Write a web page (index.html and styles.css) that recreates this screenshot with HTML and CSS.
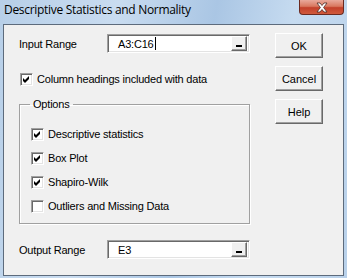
FILE: index.html
```html
<!DOCTYPE html>
<html lang="en">
<head>
  <meta charset="UTF-8">
  <title>Descriptive Statistics and Normality</title>
  <link rel="stylesheet" href="styles.css">
</head>
<body>
  <div class="window">
    <div class="titlebar">
      <span class="title">Descriptive Statistics and Normality</span>
      <div class="close">
        <svg width="14" height="11" viewBox="0 0 14 11">
          <path d="M2 1 L5 1 L7 3.5 L9 1 L12 1 L8.6 5.5 L12 10 L9 10 L7 7.5 L5 10 L2 10 L5.4 5.5 Z" fill="#fff" stroke="#4a2a24" stroke-width="0.8"/>
        </svg>
      </div>
    </div>

    <div class="client">
      <div class="main">
        <div class="range-row">
          <span class="label">Input Range</span>
          <div class="refedit">
            <span class="value">A3:C16<span class="caret"></span></span>
            <span class="browse"><span class="bar"></span></span>
          </div>
        </div>

        <label class="check top-check">
          <span class="box"><svg width="9" height="9" viewBox="0 0 9 9"><path d="M1 3 L3 5 L7 1 L7 4 L3 8 L1 6 Z" fill="#000"/></svg></span>
          Column headings included with data
        </label>

        <fieldset class="group">
          <legend>Options</legend>
          <label class="check">
            <span class="box"><svg width="9" height="9" viewBox="0 0 9 9"><path d="M1 3 L3 5 L7 1 L7 4 L3 8 L1 6 Z" fill="#000"/></svg></span>
            Descriptive statistics
          </label>
          <label class="check">
            <span class="box"><svg width="9" height="9" viewBox="0 0 9 9"><path d="M1 3 L3 5 L7 1 L7 4 L3 8 L1 6 Z" fill="#000"/></svg></span>
            Box Plot
          </label>
          <label class="check">
            <span class="box"><svg width="9" height="9" viewBox="0 0 9 9"><path d="M1 3 L3 5 L7 1 L7 4 L3 8 L1 6 Z" fill="#000"/></svg></span>
            Shapiro-Wilk
          </label>
          <label class="check">
            <span class="box"></span>
            Outliers and Missing Data
          </label>
        </fieldset>

        <div class="range-row out-row">
          <span class="label">Output Range</span>
          <div class="refedit">
            <span class="value">E3</span>
            <span class="browse"><span class="bar"></span></span>
          </div>
        </div>
      </div>

      <div class="buttons">
        <button>OK</button>
        <button>Cancel</button>
        <button>Help</button>
      </div>
    </div>
  </div>
</body>
</html>
```

FILE: styles.css
```css
/* dialog frame */
body {
  margin: 0;
  font-family: Tahoma, "DejaVu Sans", sans-serif;
}
.window {
  width: 347px;
  height: 278px;
  box-sizing: border-box;
  padding: 0 3px 2px 3px;
  display: flex;
  flex-direction: column;
  background: linear-gradient(100deg, #b7cfe8 0%, #c9dcf0 30%, #aac6e4 55%, #c6dbf0 75%, #b9d1ea 100%);
}
.titlebar {
  height: 24px;
  display: flex;
  align-items: flex-start;
}
.title {
  font-family: "Open Sans", "Liberation Sans", sans-serif;
  font-size: 12px;
  letter-spacing: -0.3px;
  color: #000;
  margin: 2px 0 0 1px;
  line-height: 16px;
}
.close {
  margin-left: auto;
  width: 45px;
  height: 15px;
  box-sizing: border-box;
  border: 1px solid #6b2a20;
  border-top: none;
  border-radius: 0 0 4px 4px;
  background: linear-gradient(#e9a99b 0%, #d9785f 45%, #c3402a 55%, #d05a3c 100%);
  display: flex;
  justify-content: center;
  align-items: center;
}
.client {
  flex: 1;
  display: flex;
  background: #f0f0f0;
  border: 1px solid #5d6b7c;
  padding: 8px 0 0 15px;
  font-family: "Liberation Sans", Arial, sans-serif;
  font-size: 11px;
  letter-spacing: -0.2px;
  color: #000;
}
.main {
  width: 231px;
  padding-top: 1px;
}
.range-row {
  display: flex;
  align-items: center;
  height: 19px;
}
.label {
  width: 88px;
}
.refedit {
  width: 143px;
  height: 19px;
  box-sizing: border-box;
  background: #fff;
  border-top: 1px solid #a0a0a0;
  border-left: 1px solid #a0a0a0;
  border-bottom: 1px solid #fff;
  border-right: 1px solid #fff;
  box-shadow: inset 1px 1px #696969, inset -1px -1px #e3e3e3;
  display: flex;
  align-items: center;
  padding: 0 2px 0 10px;
}
.value {
  flex: 1;
  display: flex;
  align-items: center;
}
.caret {
  display: inline-block;
  width: 1px;
  height: 13px;
  background: #000;
  margin-left: 1px;
}
.browse {
  width: 16px;
  height: 15px;
  box-sizing: border-box;
  background: #f0f0f0;
  border-top: 1px solid #fff;
  border-left: 1px solid #fff;
  border-bottom: 1px solid #696969;
  border-right: 1px solid #696969;
  box-shadow: inset -1px -1px #a0a0a0;
  display: flex;
  justify-content: center;
  align-items: flex-end;
  padding-bottom: 3px;
}
.bar {
  width: 6px;
  height: 2px;
  background: #000;
}

/* checkboxes */
.check {
  display: flex;
  align-items: center;
  height: 24px;
}
.top-check {
  margin-top: 14px;
  padding-left: 1px;
}
.box {
  width: 13px;
  height: 13px;
  box-sizing: border-box;
  background: #fff;
  border-top: 1px solid #a0a0a0;
  border-left: 1px solid #a0a0a0;
  border-bottom: 1px solid #fff;
  border-right: 1px solid #fff;
  box-shadow: inset 1px 1px #696969, inset -1px -1px #e3e3e3;
  margin-right: 4px;
  padding: 1px;
  display: flex;
}

/* options group */
.group {
  margin: 7px 0 0 0;
  padding: 12px 0 5px 11px;
  border: 1px solid #a0a0a0;
  box-shadow: inset 1px 1px #fff, 1px 1px #fff;
}
.group legend {
  padding: 0 3px;
  margin-left: -1px;
}
.out-row {
  margin-top: 16px;
}

/* right hand buttons */
.buttons {
  display: flex;
  flex-direction: column;
  gap: 8px;
  margin-left: 25px;
}
.buttons button {
  width: 48px;
  height: 25px;
  font-family: "Liberation Sans", Arial, sans-serif;
  font-size: 11px;
  color: #000;
  background: #f0f0f0;
  border-top: 1px solid #fff;
  border-left: 1px solid #fff;
  border-bottom: 1px solid #696969;
  border-right: 1px solid #696969;
  box-shadow: inset -1px -1px #a0a0a0;
  padding: 0;
}
```
